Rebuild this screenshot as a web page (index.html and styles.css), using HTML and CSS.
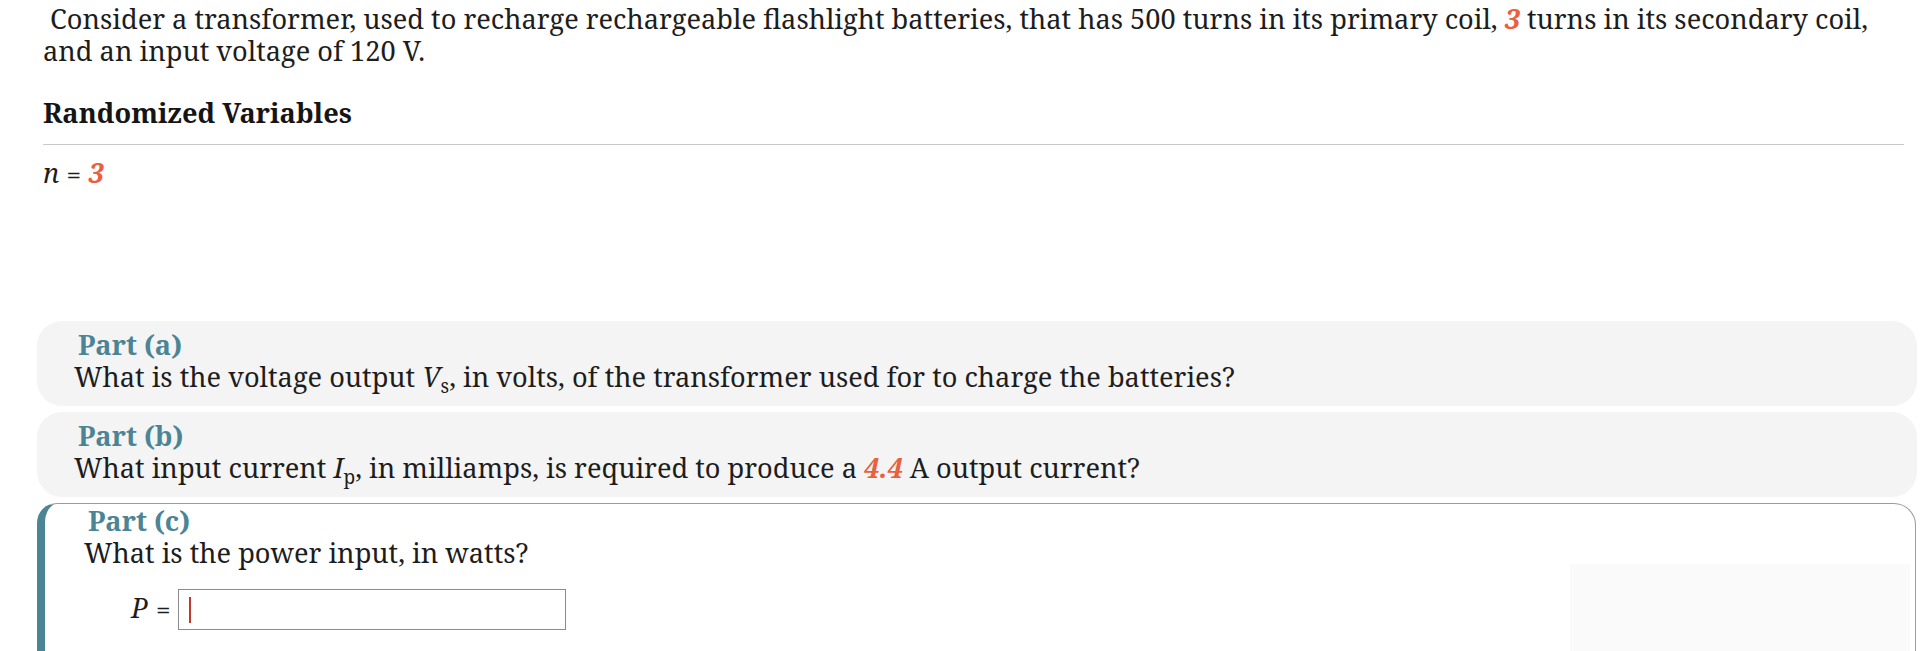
FILE: index.html
```html
<!DOCTYPE html>
<html lang="en">
<head>
<meta charset="utf-8">
<title>Transformer problem</title>
<link rel="stylesheet" href="styles.css">
</head>
<body>
<div class="page">
  <p class="intro">&nbsp;Consider a transformer, used to recharge rechargeable flashlight batteries, that has 500 turns in its primary coil, <b class="var">3</b> turns in its secondary coil,<br>and an input voltage of 120 V.</p>
  <h3 class="rv-title">Randomized Variables</h3>
  <div class="rule"></div>
  <p class="vars"><i class="mi">n</i><span class="eq">=</span><b class="var">3</b></p>

  <div class="parts">
    <div class="part">
      <div class="label">Part (a)</div>
      <div class="q">What is the voltage output <i class="mi">V</i><sub class="sub">s</sub>, in volts, of the transformer used for to charge the batteries?</div>
    </div>
    <div class="part">
      <div class="label">Part (b)</div>
      <div class="q">What input current <i class="mi">I</i><sub class="sub">p</sub>, in milliamps, is required to produce a <b class="var">4.4</b> A output current?</div>
    </div>
    <div class="part active">
      <div class="active-main">
        <div class="label">Part (c)</div>
        <div class="q">What is the power input, in watts?</div>
        <div class="answer">
          <span class="ans-label"><i class="mi">P</i><span class="eq">=</span></span>
          <div class="input"><span class="caret"></span></div>
        </div>
      </div>
      <div class="hint-panel"></div>
    </div>
  </div>
</div>
</body>
</html>
```
FILE: styles.css
```css
html, body {
  margin: 0;
  padding: 0;
  background: #ffffff;
}
body {
  font-family: "Noto Serif", "DejaVu Serif", serif;
  font-size: 27.2px;
  line-height: 32px;
  color: #1d1d1d;
  overflow: hidden;
}
.page {
  padding: 3px 3px 0 37px;
}
.intro {
  margin: 0;
  padding-left: 6px;
  white-space: nowrap;
}
.var {
  color: #e8603c;
  font-style: italic;
  font-weight: 700;
}
.rv-title {
  margin: 30px 0 0 6px;
  font-size: 27.2px;
  line-height: 32px;
  font-weight: 700;
  color: #151515;
}
.rule {
  margin: 15px 13px 0 6px;
  border-top: 1px solid #c9c9c9;
}
.vars {
  margin: 12px 0 0 6px;
}
.mi {
  font-style: italic;
}
.eq {
  font-family: "DejaVu Sans", sans-serif;
  font-size: 18px;
  margin: 0 7px;
  position: relative;
  top: -2px;
}
.sub {
  font-size: 19px;
  vertical-align: -6px;
  line-height: 0;
}
.parts {
  margin-top: 128px;
  display: flex;
  flex-direction: column;
  gap: 6px;
}
.part {
  background: #f4f4f4;
  border-radius: 25px;
  padding: 8px 20px 13px 37px;
}
.label {
  color: #4b8595;
  font-weight: 700;
  padding-left: 4px;
}
.part.active {
  background: #ffffff;
  border-top: 1px solid #9c9c9c;
  border-right: 1px solid #9c9c9c;
  border-left: 8px solid #4b8595;
  border-radius: 20px 22px 0 0;
  padding: 1px 5px 0 39px;
  min-height: 220px;
  display: flex;
  margin-right: 1px;
}
.active-main {
  flex: 1;
}
.answer {
  display: flex;
  align-items: center;
  margin-top: 20px;
  padding-left: 47px;
}
.ans-label {
  white-space: nowrap;
}
.ans-label .eq {
  margin: 0 7px 0 8px;
}
.input {
  width: 386px;
  height: 39px;
  border: 1px solid #8c8c8c;
  display: flex;
  align-items: center;
}
.caret {
  display: block;
  width: 2px;
  height: 26px;
  margin-left: 10px;
  background: #c0392b;
}
.hint-panel {
  width: 340px;
  margin-top: 59px;
  background: #fafafa;
  align-self: stretch;
}
```
